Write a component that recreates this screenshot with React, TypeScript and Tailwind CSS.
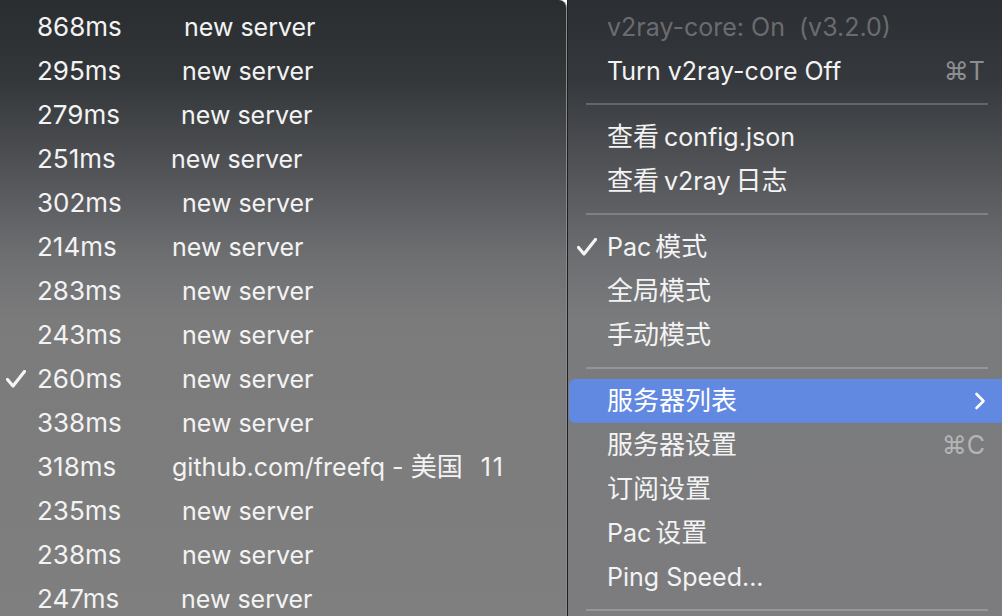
import React from "react";

const Check = ({ className }: { className?: string }) => (
  <svg className={className} width="20" height="18" viewBox="0 0 20 18" fill="none">
    <path d="M1.5 9.5 L7 16 L18.5 1.5" stroke="#f4f4f4" strokeWidth="3.2" strokeLinecap="round" strokeLinejoin="round" />
  </svg>
);

const C = ({ children }: { children: React.ReactNode }) => <span className="text-[26px]">{children}</span>;

type Row = { ms: string; name: React.ReactNode; w: string; checked?: boolean };

const rows: Row[] = [
  { ms: "868ms", name: "new server", w: "w-[147px]" },
  { ms: "295ms", name: "new server", w: "w-[145px]" },
  { ms: "279ms", name: "new server", w: "w-[144px]" },
  { ms: "251ms", name: "new server", w: "w-[134px]" },
  { ms: "302ms", name: "new server", w: "w-[145px]" },
  { ms: "214ms", name: "new server", w: "w-[135px]" },
  { ms: "283ms", name: "new server", w: "w-[145px]" },
  { ms: "243ms", name: "new server", w: "w-[145px]" },
  { ms: "260ms", name: "new server", w: "w-[145px]", checked: true },
  { ms: "338ms", name: "new server", w: "w-[145px]" },
  {
    ms: "318ms",
    name: (
      <>
        github.com/freefq - <C>美国</C>
        <span className="ml-[18px] tracking-[2px]">11</span>
      </>
    ),
    w: "w-[135px]",
  },
  { ms: "235ms", name: "new server", w: "w-[145px]" },
  { ms: "238ms", name: "new server", w: "w-[145px]" },
  { ms: "247ms", name: "new server", w: "w-[144px]" },
];

const Sep = () => (
  <div className="flex h-[22px] items-center pl-[18px] pr-[14px]">
    <div className="h-[2px] w-full bg-white/20" />
  </div>
);

const Item = ({
  children,
  checked,
  shortcut,
  disabled,
}: {
  children: React.ReactNode;
  checked?: boolean;
  shortcut?: string;
  disabled?: boolean;
}) => (
  <div className="flex h-[44px] items-center pr-[17px]">
    <div className="flex w-[39px] items-center pl-[9px]">{checked && <Check />}</div>
    <div className={"flex-1 whitespace-pre " + (disabled ? "text-white/30" : "text-[#f3f3f3]")}>{children}</div>
    {shortcut && <div className="text-white/45">{shortcut}</div>}
  </div>
);

export default function App() {
  return (
    <div
      className="flex h-[616px] w-[1002px] overflow-hidden text-[25px] leading-none"
      style={{ fontFamily: 'Inter, "Noto Sans CJK SC", sans-serif' }}
    >
      <div className="w-[567px] shrink-0 rounded-tr-[8px] border-r border-[#8a8a8a] bg-[linear-gradient(180deg,#2a2d30_0px,#34373a_80px,#54565a_180px,#6f7072_260px,#7b7b7c_320px,#7f7f7f_616px)] pt-[5px] text-[#f3f3f3]">
        {rows.map((r) => (
          <div key={r.ms} className="flex h-[44px] items-center whitespace-pre">
            <div className="flex w-[37px] items-center pl-[6px]">{r.checked && <Check />}</div>
            <div className={r.w + " text-[26px]"}>{r.ms}</div>
            <div>{r.name}</div>
          </div>
        ))}
      </div>
      <div className="w-px shrink-0 bg-[#1d1e20]" />
      <div className="flex-1 bg-[linear-gradient(180deg,#2b2e32_0px,#35383c_80px,#55575b_180px,#6e6f72_260px,#7a7b7d_320px,#7c7c7e_616px)] pt-[5px]">
        <Item disabled>v2ray-core: On  (v3.2.0)</Item>
        <Item shortcut="⌘T">Turn v2ray-core Off</Item>
        <Sep />
        <Item>
          <C>查看</C>
          <span className="ml-[5px]">config.json</span>
        </Item>
        <Item>
          <C>查看</C>
          <span className="mx-[5px]">v2ray</span>
          <C>日志</C>
        </Item>
        <Sep />
        <Item checked>
          Pac<span className="ml-[4px]"><C>模式</C></span>
        </Item>
        <Item>
          <C>全局模式</C>
        </Item>
        <Item>
          <C>手动模式</C>
        </Item>
        <Sep />
        <div className="ml-[1px] flex h-[44px] items-center rounded-l-[6px] bg-[#6189e1] pr-[16px]">
          <div className="w-[38px]" />
          <div className="flex-1 text-[26px] text-white">服务器列表</div>
          <svg width="12" height="18" viewBox="0 0 12 18" fill="none">
            <path d="M2.5 2 L9.5 9 L2.5 16" stroke="white" strokeWidth="2.6" strokeLinecap="round" strokeLinejoin="round" />
          </svg>
        </div>
        <Item shortcut="⌘C">
          <C>服务器设置</C>
        </Item>
        <Item>
          <C>订阅设置</C>
        </Item>
        <Item>
          Pac<span className="ml-[4px]"><C>设置</C></span>
        </Item>
        <Item>Ping Speed...</Item>
        <Sep />
      </div>
    </div>
  );
}
